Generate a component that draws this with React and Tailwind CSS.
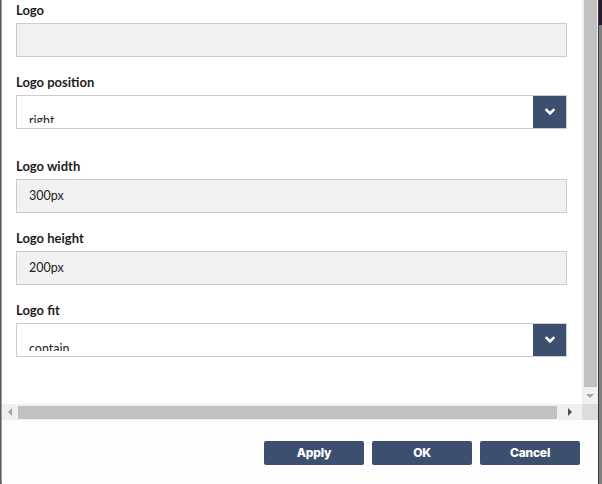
import React from 'react'

const form = { fontFamily: '"Lato", "Noto Sans", sans-serif' }
const btnFont = { fontFamily: '"Inter", "Liberation Sans", sans-serif' }

function Chevron() {
  return (
    <svg width="10" height="8" viewBox="0 0 10 8">
      <polyline points="1.5,2 5,5.5 8.5,2" fill="none" stroke="#ffffff" strokeWidth="2.6" strokeLinecap="square" />
    </svg>
  )
}

function Label({ children }) {
  return <div className="h-[18px] mb-[4px] text-[13px] leading-[18px] font-bold text-[#1e1e1e]">{children}</div>
}

function TextField({ label, value, mb = 'mb-4' }) {
  return (
    <div className={mb}>
      <Label>{label}</Label>
      <div className="h-[34px] w-[551px] border border-[#cccccc] bg-[#f1f1f1] px-[12px] flex items-center text-[12.5px] text-[#222]">
        {value}
      </div>
    </div>
  )
}

// the select shows its value pushed down and clipped, as in the original widget
function SelectField({ label, value, mb = 'mb-[28px]' }) {
  return (
    <div className={mb}>
      <Label>{label}</Label>
      <div className="h-[34px] w-[551px] border border-[#cccccc] bg-white flex">
        <div className="flex-1 py-[5px] px-[12px]">
          <div className="h-full overflow-hidden">
            <div className="pt-[11px] text-[12.5px] leading-[18px] text-[#222]">{value}</div>
          </div>
        </div>
        <div className="w-[33px] h-full bg-[#3d4f6e] flex items-center justify-center">
          <Chevron />
        </div>
      </div>
    </div>
  )
}

function Arrow({ dir }) {
  const pts = {
    down: '0,0 8,0 4,4',
    left: '4,0 4,8 0,4',
    right: '0,0 4,4 0,8',
  }[dir]
  const w = dir === 'down' ? 8 : 4
  const h = dir === 'down' ? 4 : 8
  return (
    <svg width={w} height={h} viewBox={`0 0 ${w} ${h}`}>
      <polygon points={pts} fill={dir === 'right' ? '#505050' : '#a3a3a3'} />
    </svg>
  )
}

export default function App() {
  return (
    <div className="w-[602px] h-[484px] bg-[#7c7c7c] flex overflow-hidden" style={form}>
      <div className="w-[1px] bg-[#5a5a5a]" />
      <div className="w-[597px] h-full bg-white border-l border-[#a0a0a0] rounded-bl-[4px] flex flex-col">
        <div className="flex h-[420px]">
          <div className="flex flex-col w-[581px]">
            <div className="h-[404px] pl-[14px] pt-[1px] overflow-hidden">
              <TextField label="Logo" value="" />
              <SelectField label="Logo position" value="right" />
              <TextField label="Logo width" value="300px" />
              <TextField label="Logo height" value="200px" />
              <SelectField label="Logo fit" value="contain" />
            </div>
            <div className="h-[16px] bg-[#f0f0f0] flex items-center">
              <div className="w-[16px] flex justify-center"><Arrow dir="left" /></div>
              <div className="w-[539px] h-[13px] bg-[#c1c1c1]" />
              <div className="flex-1 flex justify-center"><Arrow dir="right" /></div>
            </div>
          </div>
          <div className="w-[16px] bg-[#f0f0f0] flex flex-col">
            <div className="h-[387px] flex justify-center">
              <div className="w-[13px] h-full bg-[#c1c1c1]" />
            </div>
            <div className="h-[17px] flex items-center justify-center"><Arrow dir="down" /></div>
            <div className="h-[16px] bg-[#dcdcdc]" />
          </div>
        </div>
        <div className="flex-1 bg-[#fdfdfd] flex justify-end items-start pt-[21px] pr-[18px] gap-[8px]" style={btnFont}>
          <button className="w-[100px] h-[24px] rounded-[2px] bg-[#3d4f6e] text-white text-[12px] font-extrabold tracking-[-0.2px]">Apply</button>
          <button className="w-[100px] h-[24px] rounded-[2px] bg-[#3d4f6e] text-white text-[12px] font-extrabold tracking-[-0.2px]">OK</button>
          <button className="w-[100px] h-[24px] rounded-[2px] bg-[#3d4f6e] text-white text-[12px] font-extrabold tracking-[-0.2px]">Cancel</button>
        </div>
      </div>
      <div className="w-[1px] bg-[#3a3a3a]" />
      <div className="flex-1 flex flex-col">
        <div className="h-[25px] bg-[#2a1838]" />
        <div className="flex-1 bg-[#808080]" />
      </div>
    </div>
  )
}
